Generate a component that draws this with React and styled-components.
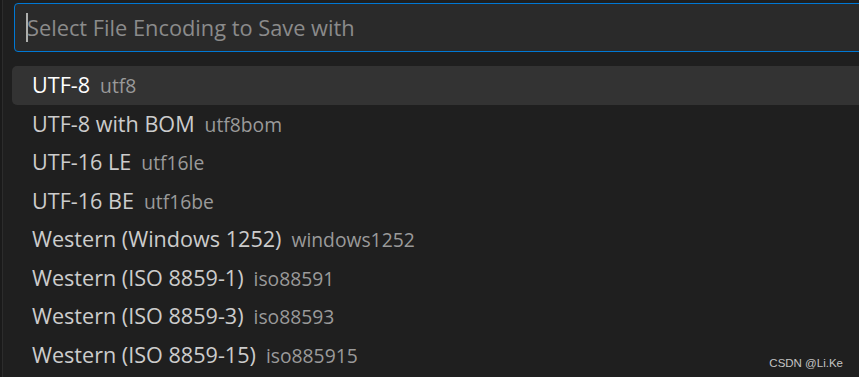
import React from "react";
import styled, { createGlobalStyle } from "styled-components";

const GlobalStyle = createGlobalStyle`
  html, body {
    margin: 0;
    padding: 0;
    background: #1f1f1f;
  }
  body {
    font-family: "Open Sans", "Noto Sans", sans-serif;
    overflow: hidden;
  }
`;

const encodings = [
  { label: "UTF-8", id: "utf8" },
  { label: "UTF-8 with BOM", id: "utf8bom" },
  { label: "UTF-16 LE", id: "utf16le" },
  { label: "UTF-16 BE", id: "utf16be" },
  { label: "Western (Windows 1252)", id: "windows1252" },
  { label: "Western (ISO 8859-1)", id: "iso88591" },
  { label: "Western (ISO 8859-3)", id: "iso88593" },
  { label: "Western (ISO 8859-15)", id: "iso885915" },
];

const Page = styled.div`
  position: relative;
  display: flex;
  width: 859px;
  height: 377px;
  overflow: hidden;
  background: #1f1f1f;
`;

const EditorEdge = styled.div`
  flex: 0 0 2px;
  background: #1a1a1a;
  border-right: 1px solid #2c2c2c;
`;

const QuickPick = styled.div`
  flex: 1;
  display: flex;
  flex-direction: column;
  padding-top: 3px;
  min-width: 0;
`;

const InputBox = styled.div`
  display: flex;
  align-items: center;
  height: 47px;
  margin-left: 11px;
  margin-right: -8px;
  padding-left: 11px;
  background: #2a2a2a;
  border: 1px solid #0078d4;
  border-radius: 4px;
`;

const Caret = styled.span`
  width: 2px;
  height: 29px;
  background: #aeafad;
  margin-right: -1px;
`;

const Placeholder = styled.span`
  font-size: 21.8px;
  color: #8b8b8b;
  white-space: nowrap;
`;

const List = styled.ul`
  list-style: none;
  margin: 14px -8px 0 9px;
  padding: 0;
`;

const Item = styled.li`
  display: flex;
  align-items: baseline;
  height: 38.5px;
  line-height: 38.5px;
  padding-left: 20px;
  border-radius: 5px;
  background: ${(p) => (p.$active ? "#333333" : "transparent")};
  white-space: nowrap;
`;

const Label = styled.span`
  font-size: 21.6px;
  color: ${(p) => (p.$active ? "#ffffff" : "#cccccc")};
`;

const Description = styled.span`
  margin-left: 10px;
  font-size: 19.3px;
  color: #9a9a9a;
`;

const Watermark = styled.div`
  position: absolute;
  right: 16px;
  bottom: 8px;
  font-family: "Liberation Sans", Arial, sans-serif;
  font-size: 11.5px;
  color: #c4c4c4;
`;

export default function App() {
  return (
    <Page>
      <GlobalStyle />
      <EditorEdge />
      <QuickPick>
        <InputBox>
          <Caret />
          <Placeholder>Select File Encoding to Save with</Placeholder>
        </InputBox>
        <List>
          {encodings.map((enc, i) => (
            <Item key={enc.id} $active={i === 0}>
              <Label $active={i === 0}>{enc.label}</Label>
              <Description>{enc.id}</Description>
            </Item>
          ))}
        </List>
      </QuickPick>
      <Watermark>CSDN @Li.Ke</Watermark>
    </Page>
  );
}
